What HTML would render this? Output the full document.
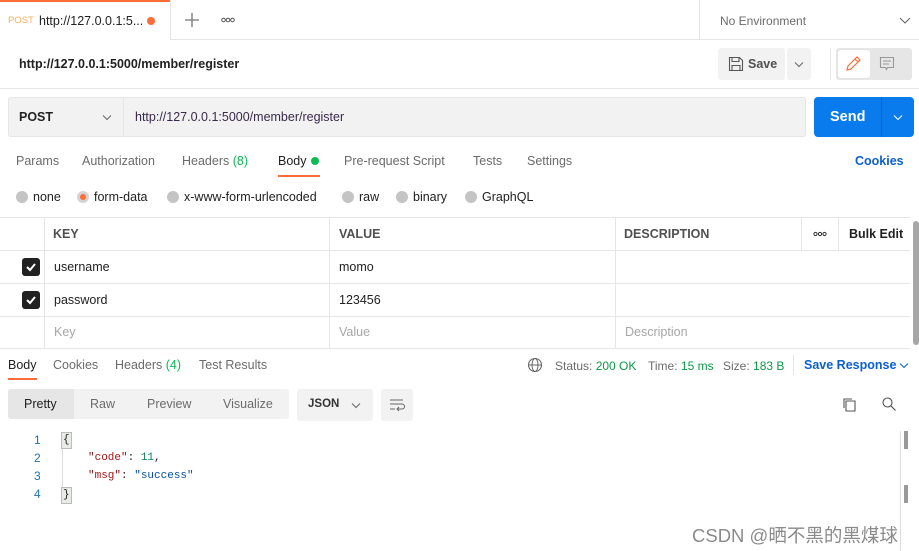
<!DOCTYPE html>
<html><head><meta charset="utf-8"><style>
*{margin:0;padding:0;box-sizing:border-box}
body{width:919px;height:551px;overflow:hidden;background:#fff;font-family:"Liberation Sans",sans-serif;font-size:12.5px;color:#212121;position:relative}
.a{position:absolute;white-space:nowrap}
.g{color:#6b6b6b}
.hl{position:absolute;height:1px;background:#e6e6e6}
.vl{position:absolute;width:1px;background:#e6e6e6}
.rad{position:absolute;width:12px;height:12px;border-radius:50%;background:#c4c4c4}
.cb{position:absolute;left:22px;width:18px;height:18px;border-radius:3px;background:#212121}
.mono{font-family:"Liberation Mono",monospace;font-size:11px}
.ln{font-family:"Liberation Sans",sans-serif;font-size:12px;color:#1a73a8}
</style></head><body>
<!-- tab bar -->
<div class="a" style="left:0;top:0;width:170px;height:2px;background:#ff6c37"></div>
<div class="hl" style="left:170px;top:39px;width:749px"></div>
<div class="vl" style="left:170px;top:0;height:40px"></div>
<div class="vl" style="left:699px;top:0;height:40px"></div>
<div class="a" style="left:8px;top:15px;font-size:9.5px;color:#f5b25a">POST</div>
<div class="a" style="left:39px;top:14px;font-size:12.5px">http://127.0.0.1:5...</div>
<div class="a" style="left:147px;top:17px;width:8px;height:8px;border-radius:50%;background:#ff6c37"></div>
<svg class="a" style="left:185px;top:13px" width="14" height="14"><path d="M7 0v14M0 7h14" stroke="#777" stroke-width="1.3"/></svg>
<svg class="a" style="left:221px;top:17px" width="14" height="6"><circle cx="2.5" cy="3" r="1.8" fill="none" stroke="#555"/><circle cx="7" cy="3" r="1.8" fill="none" stroke="#555"/><circle cx="11.5" cy="3" r="1.8" fill="none" stroke="#555"/></svg>
<div class="a g" style="left:720px;top:14px;font-size:12px">No Environment</div>
<svg class="a" style="left:899px;top:16px" width="12" height="8"><path d="M1 2l5 5 5-5" fill="none" stroke="#666" stroke-width="1.1"/></svg>
<!-- title row -->
<div class="a" style="left:19px;top:57px;font-weight:bold;font-size:12.5px">http://127.0.0.1:5000/member/register</div>
<div class="hl" style="left:0;top:88px;width:919px"></div>
<div class="a" style="left:718px;top:48px;width:67px;height:32px;background:#f2f2f2;border-radius:3px"></div>
<svg class="a" style="left:728px;top:56px" width="16" height="16"><path d="M1.5 1.5h10l3 3v10h-13z M4 1.5v4h7v-4 M4 14.5v-5h8v5" fill="none" stroke="#555" stroke-width="1.1"/></svg>
<div class="a" style="left:748px;top:57px;font-weight:bold;color:#505050">Save</div>
<div class="a" style="left:787px;top:48px;width:24px;height:32px;background:#f2f2f2;border-radius:3px"></div>
<svg class="a" style="left:794px;top:61px" width="10" height="7"><path d="M1 1.5l4 4 4-4" fill="none" stroke="#666" stroke-width="1"/></svg>
<div class="vl" style="left:830px;top:48px;height:32px"></div>
<div class="a" style="left:836px;top:48px;width:76px;height:32px;background:#e6e6e6;border-radius:3px"></div>
<div class="a" style="left:838px;top:50px;width:32px;height:28px;background:#fff;border-radius:3px"></div>
<svg class="a" style="left:845px;top:56px" width="18" height="16"><path d="M2 14l1-4 9-9 3 3-9 9z M10 3l3 3" fill="none" stroke="#ff6c37" stroke-width="1.2"/></svg>
<svg class="a" style="left:879px;top:56px" width="16" height="16"><path d="M1.5 1.5h13v10h-6l-1 2-1-2h-5z M4 5h8 M4 8h6" fill="none" stroke="#999" stroke-width="1.1"/></svg>
<!-- URL bar -->
<div class="a" style="left:8px;top:97px;width:798px;height:40px;background:#f2f2f2;border:1px solid #e6e6e6;border-radius:3px"></div>
<div class="vl" style="left:123px;top:98px;height:38px"></div>
<div class="a" style="left:19px;top:110px;font-weight:bold">POST</div>
<svg class="a" style="left:102px;top:114px" width="10" height="7"><path d="M1 1.5l4 4 4-4" fill="none" stroke="#666" stroke-width="1"/></svg>
<div class="a" style="left:135px;top:110px;color:#3a2a4a">http://127.0.0.1:5000/member/register</div>
<div class="a" style="left:814px;top:97px;width:100px;height:40px;background:#097bed;border-radius:4px"></div>
<div class="a" style="left:881px;top:97px;width:1px;height:40px;background:#0a62bc"></div>
<div class="a" style="left:830px;top:109px;color:#fff;font-weight:bold;font-size:14.5px">Send</div>
<svg class="a" style="left:893px;top:114px" width="10" height="7"><path d="M1 1.5l4 4 4-4" fill="none" stroke="#fff" stroke-width="1"/></svg>
<!-- request tabs -->
<div class="a g" style="left:16px;top:154px">Params</div>
<div class="a g" style="left:82px;top:154px">Authorization</div>
<div class="a g" style="left:182px;top:154px">Headers <span style="color:#0cbb52">(8)</span></div>
<div class="a" style="left:278px;top:154px">Body</div>
<div class="a" style="left:311px;top:157px;width:8px;height:8px;border-radius:50%;background:#0cbb52"></div>
<div class="a" style="left:278px;top:175px;width:42px;height:2px;background:#ff6c37"></div>
<div class="a g" style="left:344px;top:154px">Pre-request Script</div>
<div class="a g" style="left:473px;top:154px">Tests</div>
<div class="a g" style="left:527px;top:154px">Settings</div>
<div class="a" style="left:855px;top:154px;color:#0b5fd0;font-weight:bold">Cookies</div>
<!-- radios -->
<div class="rad" style="left:16px;top:191px"></div><div class="a" style="left:33px;top:190px">none</div>
<div class="rad" style="left:77px;top:191px;background:#d4d4d4"></div><div class="a" style="left:80px;top:194px;width:6px;height:6px;border-radius:50%;background:#ff6c37"></div><div class="a" style="left:94px;top:190px">form-data</div>
<div class="rad" style="left:167px;top:191px"></div><div class="a" style="left:184px;top:190px">x-www-form-urlencoded</div>
<div class="rad" style="left:342px;top:191px"></div><div class="a" style="left:359px;top:190px">raw</div>
<div class="rad" style="left:396px;top:191px"></div><div class="a" style="left:413px;top:190px">binary</div>
<div class="rad" style="left:465px;top:191px"></div><div class="a" style="left:482px;top:190px">GraphQL</div>
<!-- table -->
<div class="hl" style="left:0;top:217px;width:910px"></div>
<div class="hl" style="left:0;top:250px;width:910px"></div>
<div class="hl" style="left:0;top:283px;width:910px"></div>
<div class="hl" style="left:0;top:316px;width:910px"></div>
<div class="hl" style="left:0;top:348px;width:910px"></div>
<div class="vl" style="left:44px;top:217px;height:131px"></div>
<div class="vl" style="left:329px;top:217px;height:131px"></div>
<div class="vl" style="left:615px;top:217px;height:131px"></div>
<div class="vl" style="left:801px;top:217px;height:33px"></div>
<div class="vl" style="left:838px;top:217px;height:33px"></div>
<div class="a" style="left:913px;top:221px;width:6px;height:124px;background:#a6a6a6;border-radius:3px"></div>
<div class="a" style="left:53px;top:227px;font-weight:bold;color:#505050">KEY</div>
<div class="a" style="left:339px;top:227px;font-weight:bold;color:#505050">VALUE</div>
<div class="a" style="left:624px;top:227px;font-weight:bold;color:#505050">DESCRIPTION</div>
<svg class="a" style="left:813px;top:231px" width="14" height="6"><circle cx="2.5" cy="3" r="1.6" fill="none" stroke="#333"/><circle cx="7" cy="3" r="1.6" fill="none" stroke="#333"/><circle cx="11.5" cy="3" r="1.6" fill="none" stroke="#333"/></svg>
<div class="a" style="left:849px;top:227px;font-weight:bold">Bulk Edit</div>
<div class="cb" style="top:258px"></div><svg class="a" style="left:25px;top:261px" width="12" height="12"><path d="M2 6l3 3 5-6" fill="none" stroke="#fff" stroke-width="2"/></svg>
<div class="cb" style="top:291px"></div><svg class="a" style="left:25px;top:294px" width="12" height="12"><path d="M2 6l3 3 5-6" fill="none" stroke="#fff" stroke-width="2"/></svg>
<div class="a" style="left:54px;top:260px">username</div>
<div class="a" style="left:339px;top:260px">momo</div>
<div class="a" style="left:54px;top:293px">password</div>
<div class="a" style="left:339px;top:293px">123456</div>
<div class="a" style="left:54px;top:325px;color:#a6a6a6">Key</div>
<div class="a" style="left:339px;top:325px;color:#a6a6a6">Value</div>
<div class="a" style="left:625px;top:325px;color:#a6a6a6">Description</div>
<!-- response tabs -->
<div class="a" style="left:8px;top:358px">Body</div>
<div class="a" style="left:8px;top:378px;width:29px;height:2px;background:#ff6c37"></div>
<div class="a g" style="left:53px;top:358px">Cookies</div>
<div class="a g" style="left:115px;top:358px">Headers <span style="color:#0cbb52">(4)</span></div>
<div class="a g" style="left:199px;top:358px">Test Results</div>
<svg class="a" style="left:527px;top:357px" width="16" height="16"><circle cx="8" cy="8" r="6.5" fill="none" stroke="#666" stroke-width="1.1"/><ellipse cx="8" cy="8" rx="3" ry="6.5" fill="none" stroke="#666" stroke-width="1"/><path d="M1.5 8h13" stroke="#666" stroke-width="1"/></svg>
<div class="a g" style="left:555px;top:359px;font-size:12px">Status: <span style="color:#0a9a43">200 OK</span></div>
<div class="a g" style="left:648px;top:359px;font-size:12px">Time: <span style="color:#0a9a43">15 ms</span></div>
<div class="a g" style="left:723px;top:359px;font-size:12px">Size: <span style="color:#0a9a43">183 B</span></div>
<div class="vl" style="left:793px;top:355px;height:20px"></div>
<div class="a" style="left:804px;top:358px;color:#0b5fd0;font-weight:bold">Save Response</div>
<svg class="a" style="left:899px;top:362px" width="10" height="7"><path d="M1 1.5l4 4 4-4" fill="none" stroke="#0b5fd0" stroke-width="1"/></svg>
<!-- response controls -->
<div class="a" style="left:8px;top:389px;width:281px;height:30px;background:#f2f2f2;border-radius:3px"></div>
<div class="a" style="left:8px;top:389px;width:66px;height:30px;background:#e6e6e6;border-radius:3px 0 0 3px"></div>
<div class="a" style="left:24px;top:397px;color:#212121">Pretty</div>
<div class="a g" style="left:90px;top:397px">Raw</div>
<div class="a g" style="left:147px;top:397px">Preview</div>
<div class="a g" style="left:223px;top:397px">Visualize</div>
<div class="a" style="left:297px;top:389px;width:76px;height:32px;background:#f2f2f2;border-radius:3px"></div>
<div class="a" style="left:308px;top:398px;font-weight:bold;font-size:11.5px;color:#333">JSON</div>
<svg class="a" style="left:351px;top:402px" width="10" height="7"><path d="M1 1.5l4 4 4-4" fill="none" stroke="#666" stroke-width="1"/></svg>
<div class="a" style="left:381px;top:389px;width:32px;height:32px;background:#f2f2f2;border-radius:3px"></div>
<svg class="a" style="left:389px;top:397px" width="16" height="16"><path d="M1 3h13 M1 7h12a2.5 2.5 0 0 1 0 5h-4 M10 10l-2 2 2 2 M1 12h5" fill="none" stroke="#666" stroke-width="1"/></svg>
<svg class="a" style="left:842px;top:397px" width="16" height="16"><path d="M4 4h9v10h-9z M2 11v-9h8" fill="none" stroke="#555" stroke-width="1.1"/></svg>
<svg class="a" style="left:881px;top:396px" width="16" height="16"><circle cx="6.5" cy="6.5" r="4.5" fill="none" stroke="#555" stroke-width="1.1"/><path d="M10 10l4.5 4.5" stroke="#555" stroke-width="1.2"/></svg>
<!-- code -->
<div class="a ln" style="left:34px;top:433px">1</div>
<div class="a ln" style="left:34px;top:451px">2</div>
<div class="a ln" style="left:34px;top:469px">3</div>
<div class="a ln" style="left:34px;top:487px">4</div>
<div class="a" style="left:62px;top:432px;width:1px;height:70px;background:#ddd"></div>
<div class="a mono" style="left:61px;top:432px;background:#e9ece6;border:1px solid #bbb;line-height:15px;padding:0 1px">{</div>
<div class="a mono" style="left:88px;top:452px"><span style="color:#a31515">"code"</span>: <span style="color:#098658">11</span>,</div>
<div class="a mono" style="left:88px;top:470px"><span style="color:#a31515">"msg"</span>: <span style="color:#0451a5">"success"</span></div>
<div class="a mono" style="left:61px;top:487px;background:#e9ece6;border:1px solid #bbb;line-height:15px;padding:0 1px">}</div>
<div class="a" style="left:900px;top:431px;width:1px;height:120px;background:#ddd"></div>
<div class="a" style="left:904px;top:431px;width:4px;height:18px;background:#9a9a9a"></div>
<div class="a" style="left:904px;top:485px;width:4px;height:18px;background:#9a9a9a"></div>
<div class="a" style="left:692px;top:522px;font-size:18.5px;color:#8a8a8a;font-family:'Liberation Sans','Noto Sans CJK SC',sans-serif">CSDN @晒不黑的黑煤球</div>
</body></html>
